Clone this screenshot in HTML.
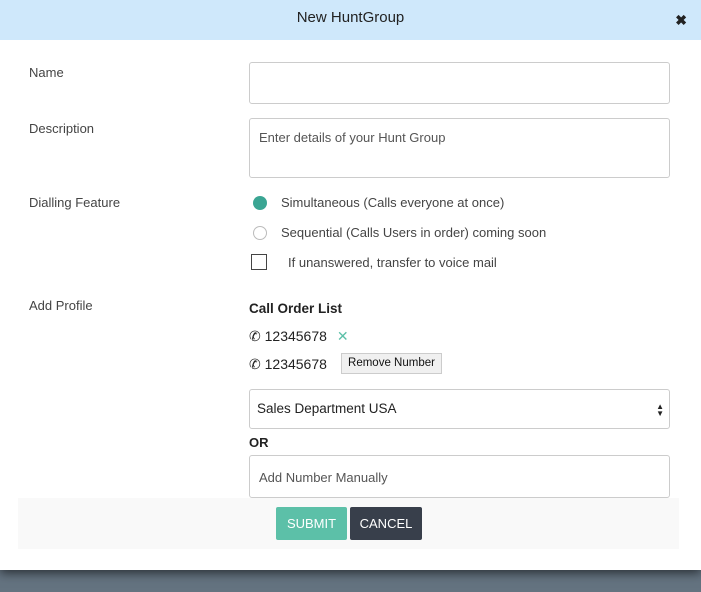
<!DOCTYPE html>
<html><head><style>
body{margin:0;width:701px;height:592px;overflow:hidden;background:#647380;font-family:"Liberation Sans",sans-serif;position:relative}
.modal{position:absolute;left:0;top:0;width:701px;height:570px;background:#fff;box-shadow:0 3px 10px rgba(0,0,0,.6)}
.hdr{position:absolute;left:0;top:0;width:701px;height:40px;background:#cfe8fb;text-align:center;line-height:36px;font-size:15px;color:#222}
.x{position:absolute;right:14px;top:12px;font-size:14px;font-weight:bold;line-height:16px}
.a{position:absolute;font-size:13px;color:#444}
.inp{position:absolute;left:249px;width:421px;border:1px solid #ccc;border-radius:3px;background:#fff;box-sizing:border-box}
.ph{font-size:13px;color:#555;padding-left:9px}
.radio{position:absolute;left:253px;width:14px;height:14px;border-radius:50%;box-sizing:border-box}
</style></head><body>
<div class="modal">
<div class="hdr">New HuntGroup<span class="x">✖</span></div>
<div class="a" style="left:29px;top:65px">Name</div>
<div class="inp" style="top:62px;height:42px"></div>
<div class="a" style="left:29px;top:121px">Description</div>
<div class="inp" style="top:118px;height:60px"><div class="ph" style="padding-top:11px">Enter details of your Hunt Group</div></div>
<div class="a" style="left:29px;top:195px">Dialling Feature</div>
<div class="radio" style="top:196px;background:#3aa593"></div>
<div class="a" style="left:281px;top:195px">Simultaneous (Calls everyone at once)</div>
<div class="radio" style="top:226px;border:1px solid #bbb"></div>
<div class="a" style="left:281px;top:225px">Sequential (Calls Users in order) coming soon</div>
<div style="position:absolute;left:251px;top:254px;width:16px;height:16px;border:1.5px solid #444;box-sizing:border-box"></div>
<div class="a" style="left:288px;top:255px">If unanswered, transfer to voice mail</div>
<div class="a" style="left:29px;top:298px">Add Profile</div>
<div class="a" style="left:249px;top:301px;font-weight:bold;font-size:13.5px;color:#222">Call Order List</div>
<div class="a" style="left:249px;top:328px;font-size:14px;color:#222">✆ 12345678 <span style="color:#5cc0a8;margin-left:6px">✕</span></div>
<div class="a" style="left:249px;top:356px;font-size:14px;color:#222">✆ 12345678</div>
<div style="position:absolute;left:341px;top:353px;width:101px;height:21px;background:#f0f0f0;border:1px solid #ccc;font-size:11.5px;line-height:19px;text-align:center;color:#111;box-sizing:border-box">Remove Number</div>
<div class="inp" style="top:389px;height:40px;background:#fff"><div style="font-size:13.5px;color:#222;padding:11px 0 0 7px">Sales Department USA</div><div style="position:absolute;right:5px;top:13px;font-size:8px;line-height:7px;color:#222">▲<br>▼</div></div>
<div class="a" style="left:249px;top:435px;font-weight:bold;font-size:13px;color:#222">OR</div>
<div class="inp" style="top:455px;height:43px"><div class="ph" style="padding-top:14px">Add Number Manually</div></div>
<div style="position:absolute;left:18px;top:498px;width:661px;height:51px;background:#f9f9f9"></div>
<div style="position:absolute;left:276px;top:507px;width:71px;height:33px;background:#5cc0a8;color:#fff;font-size:13px;line-height:33px;text-align:center;border-radius:2px">SUBMIT</div>
<div style="position:absolute;left:350px;top:507px;width:72px;height:33px;background:#383f4b;color:#fff;font-size:13px;line-height:33px;text-align:center;border-radius:2px">CANCEL</div>
</div>
</body></html>
